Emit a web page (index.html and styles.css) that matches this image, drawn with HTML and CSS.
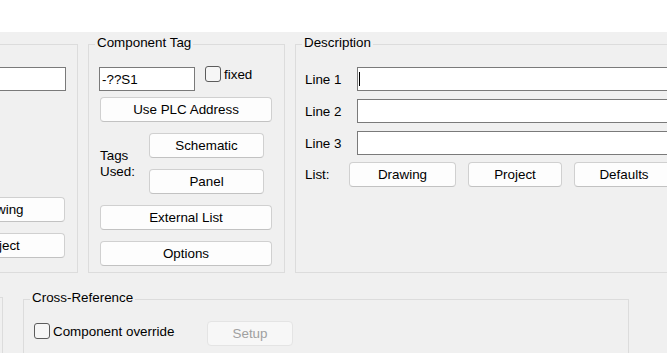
FILE: index.html
```html
<!DOCTYPE html>
<html>
<head>
<meta charset="utf-8">
<link rel="stylesheet" href="styles.css">
</head>
<body>
<div class="titlebar"></div>
<div class="dialog">
  <div class="row-top">
    <fieldset class="group group-left">
      <div class="left-body">
        <input class="textbox left-input" type="text">
        <button class="btn left-btn first">Drawing</button>
        <button class="btn left-btn">Project</button>
      </div>
    </fieldset>

    <fieldset class="group group-tag">
      <legend>Component Tag</legend>
      <div class="tag-body">
        <div class="tag-row">
          <input class="textbox tag-input" type="text" value="-??S1">
          <label class="check check-fixed"><input type="checkbox"><span>fixed</span></label>
        </div>
        <button class="btn btn-wide plc">Use PLC Address</button>
        <div class="tags-used">
          <span class="tags-label">Tags<br>Used:</span>
          <div class="tags-btns">
            <button class="btn">Schematic</button>
            <button class="btn">Panel</button>
          </div>
        </div>
        <button class="btn btn-wide">External List</button>
        <button class="btn btn-wide">Options</button>
      </div>
    </fieldset>

    <fieldset class="group group-desc">
      <legend>Description</legend>
      <div class="desc-body">
        <div class="desc-row"><span class="desc-label">Line 1</span><div class="textbox desc-box"><span class="caret"></span></div></div>
        <div class="desc-row"><span class="desc-label">Line 2</span><div class="textbox desc-box"></div></div>
        <div class="desc-row"><span class="desc-label">Line 3</span><div class="textbox desc-box"></div></div>
        <div class="list-row">
          <span class="list-label">List:</span>
          <button class="btn list-btn b-drawing">Drawing</button>
          <button class="btn list-btn b-project">Project</button>
          <button class="btn list-btn b-defaults">Defaults</button>
        </div>
      </div>
    </fieldset>
  </div>

  <div class="row-bottom">
    <fieldset class="group group-stub"></fieldset>
    <fieldset class="group group-xref">
      <legend>Cross-Reference</legend>
      <div class="xref-body">
        <label class="check xref-check"><input type="checkbox"><span>Component override</span></label>
        <button class="btn btn-setup" disabled>Setup</button>
      </div>
    </fieldset>
  </div>
</div>
</body>
</html>
```

FILE: styles.css
```css
html, body {
  margin: 0;
  padding: 0;
}
body {
  width: 667px;
  height: 353px;
  overflow: hidden;
  background: #f0f0f0;
  font: 13.4px "Liberation Sans", Arial, sans-serif;
  color: #000;
}
.titlebar {
  height: 32px;
  background: #ffffff;
}
.dialog {
  padding-top: 4px;
}

/* group boxes */
.group {
  margin: 0;
  padding: 0;
  min-width: 0;
  box-sizing: border-box;
  border: 1px solid #dcdcdc;
}
.group legend {
  margin-left: 6px;
  padding: 0 2px 2px;
  line-height: 14px;
}

.row-top {
  display: flex;
  gap: 10px;
  margin-left: -76px;
  height: 237px;
}
.group-left {
  width: 154px;
  margin-top: 8px;
  flex: none;
}
.group-tag {
  width: 197px;
  flex: none;
}
.group-desc {
  width: 400px;
  flex: none;
}

/* controls */
.textbox {
  box-sizing: border-box;
  height: 24px;
  margin: 0;
  padding: 0 2px;
  border: 1px solid #7a7a7a;
  background: #ffffff;
  font: inherit;
  color: #000;
  outline: none;
}
.btn {
  box-sizing: border-box;
  height: 25px;
  margin: 0;
  padding: 0;
  background: #fdfdfd;
  border: 1px solid #d0d0d0;
  border-bottom-color: #c2c2c2;
  border-radius: 4px;
  font: inherit;
  color: #000;
}
.check {
  display: flex;
  align-items: center;
  gap: 3px;
}
.check input {
  appearance: none;
  -webkit-appearance: none;
  box-sizing: border-box;
  width: 16px;
  height: 16px;
  margin: 0;
  border: 1px solid #5c5c5c;
  border-radius: 3px;
  background: #f6f6f6;
}

/* left group */
.left-body {
  display: flex;
  flex-direction: column;
  align-items: flex-start;
  padding: 22px 0 0 10px;
}
.left-input {
  width: 131px;
}
.left-btn {
  width: 132px;
  margin-left: -2px;
  margin-top: 11px;
}
.left-btn.first {
  margin-top: 106px;
}

/* component tag */
.tag-body {
  display: flex;
  flex-direction: column;
  align-items: flex-start;
  gap: 11px;
  padding: 15px 0 0 10px;
}
.tag-row {
  display: flex;
  align-items: flex-start;
  gap: 10px;
}
.tag-input {
  width: 96px;
}
.check-fixed {
  margin-top: -1px;
}
.btn-wide {
  width: 172px;
  margin-left: 1px;
}
.plc {
  margin-top: -5px;
}
.tags-used {
  display: flex;
  align-items: center;
  margin-left: 1px;
}
.tags-label {
  width: 49px;
  line-height: 16px;
}
.tags-btns {
  display: flex;
  flex-direction: column;
  gap: 11px;
}
.tags-btns .btn {
  width: 115px;
}

/* description */
.desc-body {
  display: flex;
  flex-direction: column;
  gap: 8px;
  padding: 15px 0 0 9px;
}
.desc-row {
  display: flex;
  align-items: center;
}
.desc-label {
  width: 52px;
  flex: none;
}
.desc-box {
  flex: 1;
  display: flex;
  align-items: center;
  padding-left: 1px;
}
.caret {
  display: block;
  width: 1px;
  height: 14px;
  background: #000;
}
.list-row {
  display: flex;
  align-items: center;
  gap: 12px;
  margin-top: -1px;
}
.list-label {
  width: 32px;
  flex: none;
}
.b-drawing { width: 107px; }
.b-project { width: 94px; }
.b-defaults { width: 100px; }

/* bottom */
.row-bottom {
  display: flex;
  align-items: flex-start;
  margin-top: 18px;
  margin-left: -100px;
}
.group-stub {
  width: 103px;
  height: 100px;
  margin-top: 6px;
  flex: none;
}
.group-xref {
  width: 606px;
  height: 100px;
  margin-left: 20px;
  flex: none;
}
.xref-body {
  display: flex;
  align-items: flex-start;
  padding: 14px 0 0 10px;
}
.xref-check {
  width: 173px;
  margin-top: 2px;
}
.btn-setup {
  width: 86px;
  background: #f7f7f7;
  border-color: #e4e4e4;
  color: #a0a0a0;
}
```
